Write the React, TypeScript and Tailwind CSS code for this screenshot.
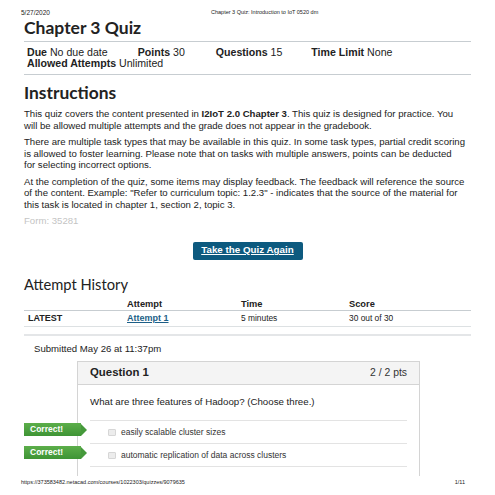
import React from 'react'

const body = { fontFamily: '"Liberation Sans", Arial, sans-serif' }
const head = { fontFamily: 'Lato, "Liberation Sans", sans-serif' }

function CorrectTag() {
  return (
    <div className="absolute left-[-66px] top-[2px] flex items-center">
      <div className="h-[13px] w-[57px] bg-gradient-to-b from-[#5cae4a] to-[#3e9435] pl-[6px] text-[8.5px] font-bold leading-[13px] text-white">
        Correct!
      </div>
      <div className="h-0 w-0 border-y-[6.5px] border-l-[6px] border-y-transparent border-l-[#45993b]" />
    </div>
  )
}

function Answer({ text }: { text: string }) {
  return (
    <div className="relative flex h-[23px] items-center border-b border-[#e3e3e3] pl-[18px]">
      <CorrectTag />
      <div className="mr-[5px] h-[7px] w-[8px] rounded-[1px] border border-[#d6d6d6] bg-[#ececec]" />
      <span className="text-[8.5px] text-[#333]">{text}</span>
    </div>
  )
}

function Lines({ lines }: { lines: React.ReactNode[] }) {
  return (
    <p>
      {lines.map((l, i) => (
        <span key={i} className="block whitespace-nowrap">
          {l}
        </span>
      ))}
    </p>
  )
}

export default function App() {
  return (
    <div className="relative h-[495px] w-[495px] overflow-hidden bg-white text-[#222]" style={body}>
      <div className="flex px-[21px] pt-[9px] text-[5.5px] leading-[7px]">
        <span className="w-[190px] text-[6.5px]">5/27/2020</span>
        <span>Chapter 3 Quiz: Introduction to IoT 0520 dm</span>
      </div>

      <div className="px-[24px]">
        <h1 className="mt-[1px] text-[17.5px] font-bold leading-[22px]" style={head}>
          Chapter 3 Quiz
        </h1>
        <div className="mt-[2px] border-t border-[#c7cdd1]" />
        <div className="flex flex-wrap pl-[3px] pt-[4.5px] text-[10.6px] leading-[11px]">
          <span className="mr-[30px]"><b>Due</b> No due date</span>
          <span className="mr-[31px]"><b>Points</b> 30</span>
          <span className="mr-[29px]"><b>Questions</b> 15</span>
          <span><b>Time Limit</b> None</span>
          <span className="w-full"><b>Allowed Attempts</b> Unlimited</span>
        </div>
        <div className="mt-[5.5px] border-t border-[#c7cdd1]" />

        <h2 className="mt-[8px] text-[17.4px] font-bold leading-[20px]" style={head}>
          Instructions
        </h2>
        <div className="mt-[5px] space-y-[5px] text-[9.6px] leading-[11.5px]">
          <Lines
            lines={[
              <>This quiz covers the content presented in <b>I2IoT 2.0 Chapter 3</b>. This quiz is designed for practice. You</>,
              'will be allowed multiple attempts and the grade does not appear in the gradebook.',
            ]}
          />
          <Lines
            lines={[
              'There are multiple task types that may be available in this quiz. In some task types, partial credit scoring',
              'is allowed to foster learning. Please note that on tasks with multiple answers, points can be deducted',
              'for selecting incorrect options.',
            ]}
          />
          <Lines
            lines={[
              'At the completion of the quiz, some items may display feedback. The feedback will reference the source',
              'of the content. Example: "Refer to curriculum topic: 1.2.3" - indicates that the source of the material for',
              'this task is located in chapter 1, section 2, topic 3.',
            ]}
          />
          <p className="text-[#c4c4c4]">Form: 35281</p>
        </div>

        <div className="mt-[15px] flex justify-center">
          <div className="flex h-[18px] w-[110px] items-center justify-center rounded-[2px] bg-[#0d5a7f] text-[9.8px] font-bold text-white underline">
            Take the Quiz Again
          </div>
        </div>

        <h2 className="mt-[16.5px] text-[14.7px] leading-[17px]" style={head}>
          Attempt History
        </h2>
        <div className="mt-[5px]">
          <div className="grid h-[13px] grid-cols-[99px_114px_108px_1fr] items-center border-b border-[#c7cdd1] px-[4px] text-[9.3px] font-bold">
            <span />
            <span>Attempt</span>
            <span>Time</span>
            <span>Score</span>
          </div>
          <div className="grid h-[16px] grid-cols-[99px_114px_108px_1fr] items-center border-b border-[#dde1e3] px-[4px] text-[8.4px]">
            <span className="text-[9px] font-bold">LATEST</span>
            <span className="text-[9px] font-bold text-[#1d5f87] underline">Attempt 1 </span>
            <span>5 minutes</span>
            <span>30 out of 30</span>
          </div>
        </div>
        <div className="mt-[7px] border-t-2 border-[#e4e6e8]" />

        <div className="mt-[6.5px] pl-[10px] text-[9.6px] leading-[11px]">Submitted May 26 at 11:37pm</div>

        <div className="ml-[53px] mt-[7.5px] h-[200px] w-[343px] border-x border-t border-[#d4d4d4]">
          <div className="flex h-[23px] items-center justify-between border-b border-[#d4d4d4] bg-[#f4f4f4] px-[12px]">
            <span className="text-[11.4px] font-bold">Question 1</span>
            <span className="text-[10.4px] text-[#333]">2 / 2 pts</span>
          </div>
          <div className="px-[12px]">
            <p className="pt-[11px] text-[9.7px] leading-[12px]">What are three features of Hadoop? (Choose three.)</p>
            <div className="mt-[12px] border-t border-[#e3e3e3]">
              <Answer text="easily scalable cluster sizes" />
              <Answer text="automatic replication of data across clusters" />
            </div>
          </div>
        </div>
      </div>

      <div className="absolute bottom-0 left-0 right-0 flex h-[19px] items-start justify-between bg-white px-[21px] pt-[2px] text-[5.5px] leading-[8px]">
        <span>https://373583482.netacad.com/courses/1022303/quizzes/9079635</span>
        <span className="pr-[9px]">1/11</span>
      </div>
    </div>
  )
}
